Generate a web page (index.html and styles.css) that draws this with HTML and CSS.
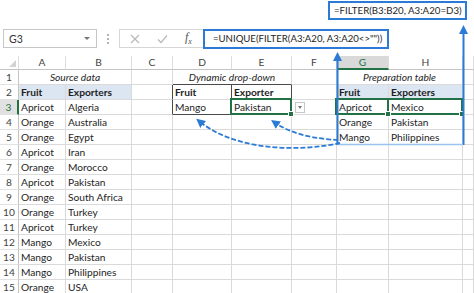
FILE: index.html
```html
<!DOCTYPE html>
<html lang="en">
<head>
    <meta charset="UTF-8">
    <title>UNIQUE FILTER dynamic drop-down</title>
    <link rel="stylesheet" href="styles.css">
</head>
<body>
    <div class="callout">=FILTER(B3:B20, A3:A20=D3)</div>

    <div class="bar">
        <div class="namebox"><span>G3</span><span class="caret"></span></div>
        <div class="dots"><i></i><i></i><i></i></div>
        <div class="fxbox">
            <svg width="10" height="10" viewBox="0 0 10 10"><path d="M1 1 L9 9 M9 1 L1 9" stroke="#b8b8b8" stroke-width="1.2" fill="none"/></svg>
            <svg width="11" height="10" viewBox="0 0 11 10"><path d="M1 5.5 L4 8.5 L10 1.5" stroke="#b8b8b8" stroke-width="1.2" fill="none"/></svg>
            <span class="fx">f<sub>x</sub></span>
        </div>
        <div class="formula">=UNIQUE(FILTER(A3:A20, A3:A20&lt;&gt;""))</div>
    </div>

    <div class="sheet">
        <div class="hd corner"></div><div class="hd">A</div><div class="hd">B</div><div class="hd">C</div><div class="hd">D</div><div class="hd">E</div><div class="hd">F</div><div class="hd on">G</div><div class="hd">H</div><div class="hd"></div>

        <div class="rh">1</div><div class="cap">Source data</div><div></div><div class="cap dk-b">Dynamic drop-down</div><div></div><div class="cap">Preparation table</div><div></div>
        <div class="rh">2</div><div class="th blue">Fruit</div><div class="th blue">Exporters</div><div class="dk-r"></div><div class="th dk-r">Fruit</div><div class="th dk-r">Exporter</div><div></div><div class="th blue">Fruit</div><div class="th blue">Exporters</div><div></div>
        <div class="rh on">3</div><div>Apricot</div><div>Algeria</div><div class="dk-r"></div><div class="dk-r dk-b">Mango</div><div class="dk-r dk-b frame">Pakistan</div><div class="pick"><span class="ddbtn"></span></div><div class="frame">Apricot</div><div class="frame">Mexico</div><div></div>
        <div class="rh">4</div><div>Orange</div><div>Australia</div><div></div><div></div><div></div><div></div><div>Orange</div><div>Pakistan</div><div></div>
        <div class="rh">5</div><div>Orange</div><div>Egypt</div><div></div><div></div><div></div><div></div><div>Mango</div><div>Philippines</div><div></div>
        <div class="rh">6</div><div>Apricot</div><div>Iran</div><div></div><div></div><div></div><div></div><div></div><div></div><div></div>
        <div class="rh">7</div><div>Orange</div><div>Morocco</div><div></div><div></div><div></div><div></div><div></div><div></div><div></div>
        <div class="rh">8</div><div>Apricot</div><div>Pakistan</div><div></div><div></div><div></div><div></div><div></div><div></div><div></div>
        <div class="rh">9</div><div>Orange</div><div>South Africa</div><div></div><div></div><div></div><div></div><div></div><div></div><div></div>
        <div class="rh">10</div><div>Orange</div><div>Turkey</div><div></div><div></div><div></div><div></div><div></div><div></div><div></div>
        <div class="rh">11</div><div>Apricot</div><div>Turkey</div><div></div><div></div><div></div><div></div><div></div><div></div><div></div>
        <div class="rh">12</div><div>Mango</div><div>Mexico</div><div></div><div></div><div></div><div></div><div></div><div></div><div></div>
        <div class="rh">13</div><div>Mango</div><div>Pakistan</div><div></div><div></div><div></div><div></div><div></div><div></div><div></div>
        <div class="rh">14</div><div>Mango</div><div>Philippines</div><div></div><div></div><div></div><div></div><div></div><div></div><div></div>
        <div class="rh">15</div><div>Orange</div><div>USA</div><div></div><div></div><div></div><div></div><div></div><div></div><div></div>
    </div>

    <!-- callout arrows drawn over the sheet -->
    <svg class="arrows" width="474" height="293" viewBox="0 0 474 293">
        <defs>
            <marker id="head" viewBox="0 0 10 10" refX="6" refY="5" markerWidth="5" markerHeight="5" orient="auto">
                <path d="M0 0 L10 5 L0 10 z" fill="#2b7bd6"/>
            </marker>
        </defs>
        <path d="M337.5 145 V59" stroke="#2b7bd6" stroke-width="2" fill="none"/>
        <polygon points="333,61 342,61 337.5,52" fill="#2b7bd6"/>
        <path d="M463.5 145 V33" stroke="#2b7bd6" stroke-width="2" fill="none"/>
        <polygon points="459,34 468,34 463.5,25" fill="#2b7bd6"/>
        <path d="M338 144.5 H463" stroke="#9cc3ee" stroke-width="1.5" fill="none"/>
        <path d="M340 143 C300 152, 235 151, 199 121" class="dash" marker-end="url(#head)"/>
        <path d="M338 140 C318 139, 292 135, 274 122" class="dash" marker-end="url(#head)"/>
    </svg>
</body>
</html>
```

FILE: styles.css
```css
body {
    margin: 0;
    width: 474px;
    height: 293px;
    overflow: hidden;
    position: relative;
    background-color: #ffffff;
    font-family: Lato, "Liberation Sans", sans-serif;
    font-size: 10.2px;
    color: #1e1e1e;
}

.bar {
    display: flex;
    align-items: flex-start;
    height: 56px;
    box-sizing: border-box;
    padding: 29px 0 0 3px;
}

.namebox {
    width: 94px;
    height: 19px;
    box-sizing: border-box;
    border: 1px solid #c6c6c6;
    display: flex;
    align-items: center;
    justify-content: space-between;
    padding: 0 6px 0 5px;
    color: #333333;
    font-size: 10.5px;
}

.caret {
    width: 0;
    height: 0;
    border-left: 3px solid transparent;
    border-right: 3px solid transparent;
    border-top: 3px solid #777777;
}

.dots {
    width: 22px;
    height: 19px;
    display: flex;
    flex-direction: column;
    align-items: center;
    justify-content: center;
    gap: 2px;
}

.dots i {
    width: 2px;
    height: 2px;
    background-color: #b3b3b3;
}

.fxbox {
    width: 84px;
    height: 19px;
    box-sizing: border-box;
    border: 1px solid #d6d6d6;
    border-right: none;
    display: flex;
    align-items: center;
    gap: 17px;
    padding-left: 10px;
}

.fx {
    font-family: "Liberation Serif", serif;
    font-style: italic;
    font-size: 12px;
    color: #555555;
}

.fx sub {
    font-size: 8px;
}

.formula {
    width: 186px;
    height: 20px;
    box-sizing: border-box;
    border: 2px solid #2b7bd6;
    padding-left: 8px;
    font-size: 9.6px;
    line-height: 16px;
    white-space: nowrap;
    overflow: hidden;
}

.callout {
    position: absolute;
    left: 328px;
    top: 1px;
    width: 139px;
    height: 19px;
    box-sizing: border-box;
    border: 2px solid #2b7bd6;
    background-color: #ffffff;
    padding-left: 4px;
    font-size: 9.7px;
    line-height: 15px;
    white-space: nowrap;
    z-index: 2;
}

.sheet {
    display: grid;
    grid-template-columns: 19px 47px 66px 41px 59px 60px 45px 52px 74px 1fr;
    grid-template-rows: 14px;
    grid-auto-rows: 15px;
}

.sheet > div {
    box-sizing: border-box;
    border-right: 1px solid #dadada;
    border-bottom: 1px solid #dadada;
    padding: 0 2px;
    line-height: 14px;
    white-space: nowrap;
    position: relative;
}

.sheet > .hd {
    text-align: center;
    color: #444444;
    border-right-color: #dcdcdc;
    border-bottom-color: #c4c4c4;
    line-height: 13px;
}

.sheet > .hd.on {
    background-color: #d9d9d9;
    border-bottom: 2px solid #217346;
    color: #217346;
}

.corner::after {
    content: "";
    position: absolute;
    right: 2px;
    bottom: 2px;
    border-left: 7px solid transparent;
    border-bottom: 7px solid #d3d3d3;
}

.sheet > .rh {
    text-align: center;
    color: #444444;
    padding: 0;
    border-right-color: #c4c4c4;
    border-bottom-color: #e2e2e2;
}

.sheet > .rh.on {
    background-color: #e1e1e1;
    color: #217346;
    border-right: 2px solid #217346;
}

.sheet > .cap {
    grid-column: span 2;
    text-align: center;
    font-style: italic;
}

.th {
    font-weight: bold;
}

.sheet > .blue {
    background-color: #dce6f2;
}

.sheet > .dk-r {
    border-right-color: #4a4a4a;
}

.sheet > .dk-b {
    border-bottom-color: #4a4a4a;
}

.frame::after {
    content: "";
    position: absolute;
    left: -2px;
    top: -2px;
    right: -1px;
    bottom: -1px;
    border: 2px solid #217346;
}

.frame::before {
    content: "";
    position: absolute;
    right: -3px;
    bottom: -3px;
    width: 4px;
    height: 4px;
    background-color: #217346;
    border: 1px solid #ffffff;
    z-index: 1;
}

.sheet > .pick {
    display: flex;
    align-items: center;
    padding-left: 3px;
}

.ddbtn {
    width: 10px;
    height: 11px;
    box-sizing: border-box;
    border: 1px solid #c8c8c8;
    background-color: #ffffff;
    display: flex;
    align-items: center;
    justify-content: center;
}

.ddbtn::after {
    content: "";
    border-left: 2.5px solid transparent;
    border-right: 2.5px solid transparent;
    border-top: 3px solid #777777;
}

.arrows {
    position: absolute;
    left: 0;
    top: 0;
    pointer-events: none;
    z-index: 3;
}

.dash {
    fill: none;
    stroke: #2b7bd6;
    stroke-width: 1.8;
    stroke-dasharray: 5 2;
}
```
